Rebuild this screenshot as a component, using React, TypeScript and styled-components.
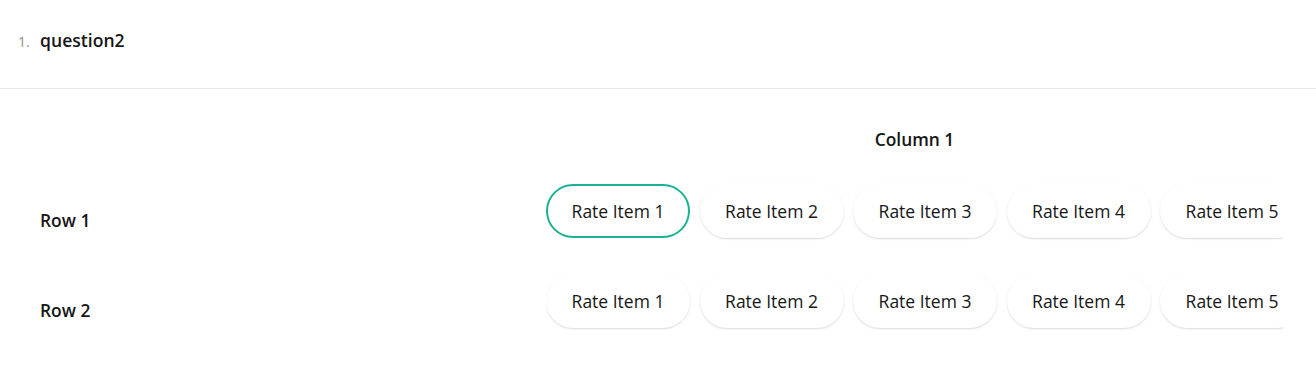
import React from "react";
import styled, { createGlobalStyle } from "styled-components";

const Global = createGlobalStyle`
  html, body { margin: 0; padding: 0; background: #fff; }
  body { font-family: "Open Sans", "Noto Sans", sans-serif; color: #161616; }
`;

const Page = styled.div`
  width: 1316px;
  background: #fff;
`;

const Header = styled.div`
  height: 89px;
  box-sizing: border-box;
  border-bottom: 1px solid #e8e8e8;
  padding: 28px 0 0 18px;
  display: flex;
  align-items: baseline;
  gap: 7px;
`;

const Num = styled.span`
  font-size: 14px;
  line-height: 24px;
  color: #909090;
  width: 15px;
`;

const Title = styled.span`
  font-size: 17.6px;
  line-height: 24px;
  font-weight: 600;
  color: #161616;
`;

const Table = styled.div`
  display: grid;
  grid-template-columns: 506px 737px;
  padding-left: 40px;
`;

const HeadCell = styled.div`
  height: 85px;
  box-sizing: border-box;
  padding-top: 38px;
  font-size: 17.4px;
  line-height: 24px;
  font-weight: 600;
  text-align: center;
`;

const RowLabel = styled.div`
  height: 90px;
  box-sizing: border-box;
  padding-top: 34px;
  font-size: 17.4px;
  line-height: 24px;
  font-weight: 600;
`;

const Cell = styled.div`
  height: 90px;
  box-sizing: border-box;
  padding-top: 10px;
  overflow: hidden;
`;

const Rating = styled.div`
  display: flex;
  gap: 9.5px;
  padding-bottom: 4px;
`;

const Pill = styled.div<{ $selected?: boolean }>`
  flex: 0 0 144px;
  height: 53.5px;
  box-sizing: border-box;
  border-radius: 27px;
  border: 2px solid ${(p) => (p.$selected ? "#19b394" : "transparent")};
  box-shadow: ${(p) => (p.$selected ? "none" : "0 1px 2px rgba(0,0,0,0.15)")};
  background: #fff;
  display: flex;
  align-items: center;
  justify-content: center;
  font-size: 17.5px;
  line-height: 24px;
  color: #161616;
`;

const items = ["Rate Item 1", "Rate Item 2", "Rate Item 3", "Rate Item 4", "Rate Item 5"];
const rows = [
  { label: "Row 1", selected: 0 },
  { label: "Row 2", selected: -1 },
];

export default function App() {
  return (
    <Page>
      <Global />
      <Header>
        <Num>1.</Num>
        <Title>question2</Title>
      </Header>
      <Table>
        <div />
        <HeadCell>Column 1</HeadCell>
        {rows.map((r) => (
          <React.Fragment key={r.label}>
            <RowLabel>{r.label}</RowLabel>
            <Cell>
              <Rating>
                {items.map((it, i) => (
                  <Pill key={it} $selected={i === r.selected}>
                    {it}
                  </Pill>
                ))}
              </Rating>
            </Cell>
          </React.Fragment>
        ))}
      </Table>
    </Page>
  );
}
